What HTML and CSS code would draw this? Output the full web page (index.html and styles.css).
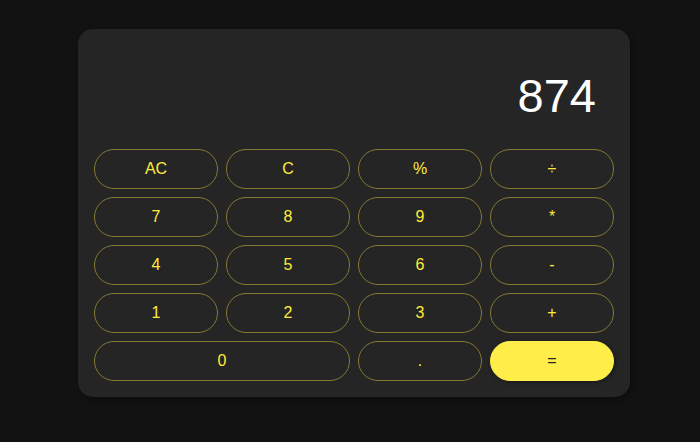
FILE: index.html
```html
<!DOCTYPE html>
<html lang="en">

<head>
    <meta charset="UTF-8">
    <meta name="viewport" content="width=device-width, initial-scale=1.0">
    <title>Calculator</title>
    <link rel="stylesheet" href="styles.css">
</head>

<body>
    <div class="calculator">
        <div class="display">874</div>
        <div class="keys">
            <button class="key">AC</button>
            <button class="key">C</button>
            <button class="key">%</button>
            <button class="key">÷</button>
            <button class="key">7</button>
            <button class="key">8</button>
            <button class="key">9</button>
            <button class="key">*</button>
            <button class="key">4</button>
            <button class="key">5</button>
            <button class="key">6</button>
            <button class="key">-</button>
            <button class="key">1</button>
            <button class="key">2</button>
            <button class="key">3</button>
            <button class="key">+</button>
            <button class="key zero">0</button>
            <button class="key">.</button>
            <button class="key equals">=</button>
        </div>
    </div>
</body>

</html>
```

FILE: styles.css
```css
body {
    margin: 0;
    height: 442px;
    background-color: #121212;
    font-family: "Liberation Sans", Arial, sans-serif;
    padding: 29px 0 0 78px;
    box-sizing: border-box;
}

.calculator {
    width: 552px;
    box-sizing: border-box;
    padding: 16px;
    background-color: #252525;
    border-radius: 15px;
    box-shadow: 2px 2px 6px rgba(0, 0, 0, 0.35);
}

.display {
    height: 104px;
    display: flex;
    align-items: center;
    justify-content: flex-end;
    padding-right: 18px;
    padding-bottom: 4px;
    box-sizing: border-box;
    color: #ffffff;
    font-size: 47px;
}

.keys {
    display: grid;
    grid-template-columns: repeat(4, 124px);
    grid-auto-rows: 40px;
    gap: 8px;
}

.key {
    background: transparent;
    border: 1px solid #857a33;
    border-radius: 20px;
    color: #ffeb3b;
    font-family: "Liberation Sans", Arial, sans-serif;
    font-size: 16px;
    cursor: pointer;
}

.zero {
    grid-column: span 2;
}

.equals {
    background: #ffee4a;
    border-color: #ffee4a;
    color: #222222;
    box-shadow: 1px 1px 4px rgba(0, 0, 0, 0.4);
}
```
